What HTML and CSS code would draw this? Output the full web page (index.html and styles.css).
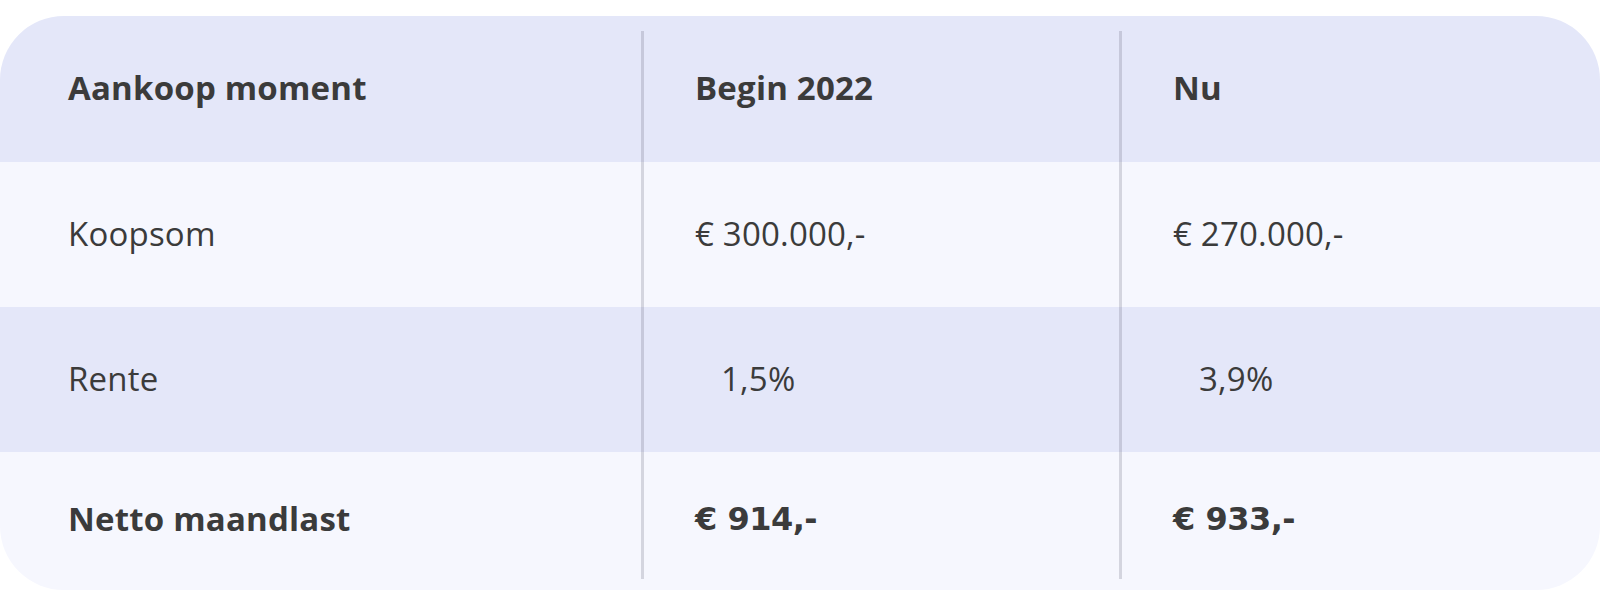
FILE: index.html
```html
<!DOCTYPE html>
<html lang="nl">
<head>
<meta charset="utf-8">
<title>Maandlasten vergelijking</title>
<link rel="stylesheet" href="styles.css">
</head>
<body>
<div class="table">
  <div class="row row-head">
    <div class="cell cell-first">Aankoop moment</div>
    <div class="divider"></div>
    <div class="cell">Begin 2022</div>
    <div class="divider"></div>
    <div class="cell">Nu</div>
  </div>
  <div class="row row-light">
    <div class="cell cell-first">Koopsom</div>
    <div class="divider"></div>
    <div class="cell">€ 300.000,-</div>
    <div class="divider"></div>
    <div class="cell">€ 270.000,-</div>
  </div>
  <div class="row row-dark">
    <div class="cell cell-first">Rente</div>
    <div class="divider"></div>
    <div class="cell cell-indent">1,5%</div>
    <div class="divider"></div>
    <div class="cell cell-indent">3,9%</div>
  </div>
  <div class="row row-light row-total">
    <div class="cell cell-first">Netto maandlast</div>
    <div class="divider"></div>
    <div class="cell"><strong class="amount">€ 914,-</strong></div>
    <div class="divider"></div>
    <div class="cell"><strong class="amount">€ 933,-</strong></div>
  </div>
</div>
</body>
</html>
```
FILE: styles.css
```css
html, body {
  margin: 0;
  padding: 0;
  background: #ffffff;
}

body {
  padding-top: 16px;
  font-family: "Open Sans", "Noto Sans", sans-serif;
  color: #3b3b3b;
}

.table {
  width: 1600px;
  height: 574px;
  border-radius: 64px;
  overflow: hidden;
  display: flex;
  flex-direction: column;
}

.row {
  display: grid;
  grid-template-columns: 641px 3px 475px 3px 1fr;
  align-items: stretch;
}

.row-head { height: 146px; background: #e4e7f9; }
.row-light { background: #f6f7fe; }
.row-dark { background: #e4e7f9; }
.row-light, .row-dark { height: 145px; }
.row-total { height: 138px; }

.cell {
  display: flex;
  align-items: center;
  padding-left: 51px;
  padding-bottom: 2px;
  font-size: 33px;
  font-weight: 400;
  letter-spacing: 0.2px;
  white-space: nowrap;
}

.cell-first {
  padding-left: 68px;
}

.row-head .cell,
.row-total .cell-first {
  font-weight: 700;
  letter-spacing: 0.2px;
}

.row-head .cell { padding-bottom: 4px; }
.row-total .cell { padding-bottom: 5px; }

.cell-indent {
  padding-left: 77px;
}

.divider {
  background: rgba(80, 82, 100, 0.2);
}

.row-head .divider { margin-top: 15px; }
.row-total .divider { margin-bottom: 11px; }

.amount {
  font-family: "DejaVu Sans", sans-serif;
  font-weight: 700;
  font-size: 32px;
  letter-spacing: -0.5px;
}
```
